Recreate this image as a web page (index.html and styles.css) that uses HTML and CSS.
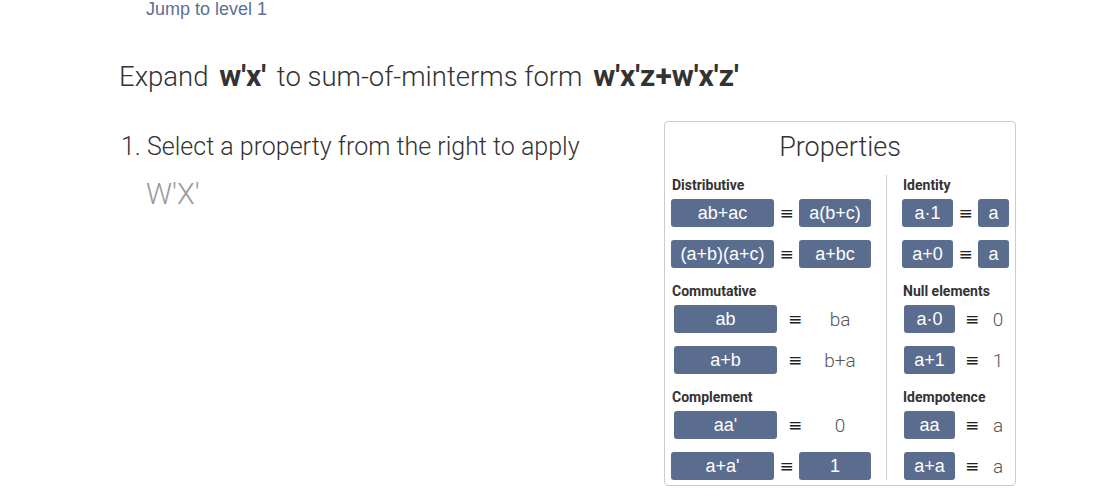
FILE: index.html
```html
<!DOCTYPE html>
<html lang="en">
<head>
<meta charset="utf-8">
<title>Expand to sum-of-minterms form</title>
<link rel="stylesheet" href="styles.css">
</head>
<body>
<a class="jump" href="#">Jump to level 1</a>
<div class="main">
  <h1 class="prompt">Expand <b>w'x'</b> to sum-of-minterms form <b>w'x'z+w'x'z'</b></h1>
  <div class="content">
    <div class="steps">
      <ol class="step-list">
        <li>Select a property from the right to apply
          <div class="expr">W'X'</div>
        </li>
      </ol>
    </div>
    <div class="panel">
      <div class="panel-title">Properties</div>
      <div class="cols">
        <div class="col col-left">
          <div class="group">
            <div class="label">Distributive</div>
            <div class="row"><span class="btn bl">ab+ac</span><span class="eq">≡</span><span class="btn br">a(b+c)</span></div>
            <div class="row"><span class="btn bl">(a+b)(a+c)</span><span class="eq">≡</span><span class="btn br">a+bc</span></div>
          </div>
          <div class="group">
            <div class="label">Commutative</div>
            <div class="row plain"><span class="btn bl">ab</span><span class="eq">≡</span><span class="val">ba</span></div>
            <div class="row plain"><span class="btn bl">a+b</span><span class="eq">≡</span><span class="val">b+a</span></div>
          </div>
          <div class="group">
            <div class="label">Complement</div>
            <div class="row plain"><span class="btn bl">aa'</span><span class="eq">≡</span><span class="val">0</span></div>
            <div class="row"><span class="btn bl">a+a'</span><span class="eq">≡</span><span class="btn br">1</span></div>
          </div>
        </div>
        <div class="col col-right">
          <div class="group">
            <div class="label">Identity</div>
            <div class="row"><span class="btn bl">a·1</span><span class="eq">≡</span><span class="btn br">a</span></div>
            <div class="row"><span class="btn bl">a+0</span><span class="eq">≡</span><span class="btn br">a</span></div>
          </div>
          <div class="group">
            <div class="label">Null elements</div>
            <div class="row plain"><span class="btn bl">a·0</span><span class="eq">≡</span><span class="val">0</span></div>
            <div class="row plain"><span class="btn bl">a+1</span><span class="eq">≡</span><span class="val">1</span></div>
          </div>
          <div class="group">
            <div class="label">Idempotence</div>
            <div class="row plain"><span class="btn bl">aa</span><span class="eq">≡</span><span class="val">a</span></div>
            <div class="row plain"><span class="btn bl">a+a</span><span class="eq">≡</span><span class="val">a</span></div>
          </div>
        </div>
      </div>
    </div>
  </div>
</div>
</body>
</html>
```
FILE: styles.css
```css
html, body {
  margin: 0;
  padding: 0;
  background: #fff;
}
body {
  font-family: Roboto, "Liberation Sans", sans-serif;
  color: #333;
  width: 1100px;
  height: 497px;
  overflow: hidden;
}
.jump {
  display: block;
  margin: -1px 0 0 146px;
  width: max-content;
  font-family: "Liberation Sans", Arial, sans-serif;
  font-size: 18px;
  line-height: 20px;
  color: #5b6f95;
  text-decoration: none;
}
.main {
  margin-left: 119px;
}
.prompt {
  margin: 41px 0 0 0;
  font-size: 27.5px;
  line-height: 32px;
  font-weight: 300;
  color: #333;
}
.prompt b {
  font-size: 30px;
  font-weight: 700;
  margin: 0 4px;
}
.content {
  display: flex;
  margin-top: 28px;
}
.steps {
  width: 545px;
  padding-top: 11px;
}
.step-list {
  margin: 0;
  padding: 0 0 0 2px;
  list-style-position: inside;
  font-size: 25px;
  line-height: 30px;
  font-weight: 300;
  color: #333;
}
.expr {
  padding-left: 25px;
  margin-top: 15px;
  font-size: 29px;
  line-height: 34px;
  font-weight: 300;
  color: #999;
}
.panel {
  box-sizing: border-box;
  width: 352px;
  border: 1px solid #cccccc;
  border-radius: 4px;
  padding: 7px 6px 5px 6px;
}
.panel-title {
  text-align: center;
  font-size: 27px;
  line-height: 36px;
  font-weight: 300;
  color: #333;
  margin-bottom: 10px;
}
.cols {
  display: grid;
  grid-template-columns: 216px 1fr;
}
.col-left {
  padding-right: 15px;
  border-right: 1px solid #cccccc;
}
.col-right {
  padding-left: 15px;
}
.group + .group {
  margin-top: 13px;
}
.label {
  font-size: 14px;
  line-height: 20px;
  font-weight: 700;
  color: #333;
  margin-bottom: 4px;
  padding-left: 1px;
}
.row {
  display: flex;
  align-items: center;
  height: 28px;
}
.row + .row {
  margin-top: 13px;
}
.btn {
  box-sizing: border-box;
  height: 28px;
  display: flex;
  align-items: center;
  justify-content: center;
  background: #5a6d8f;
  color: #fff;
  border-radius: 3px;
  font-family: "Liberation Sans", Arial, sans-serif;
  font-size: 18px;
}
.eq {
  width: 25px;
  text-align: center;
  font-family: "DejaVu Sans", sans-serif;
  font-size: 17px;
  line-height: 20px;
  color: #222;
}
.val {
  text-align: center;
  font-size: 19px;
  font-weight: 300;
  color: #555;
}
.col-left .bl { width: 103px; }
.col-left .br { width: 72px; }
.col-left .plain { padding-left: 3px; }
.col-left .plain .eq { width: 36px; }
.col-left .plain .val { width: 54px; }
.col-right .bl { width: 51px; }
.col-right .br { width: 31px; }
.col-right .plain { padding-left: 2px; }
.col-right .plain .eq { width: 34px; }
.col-right .plain .val { width: 18px; }
```
